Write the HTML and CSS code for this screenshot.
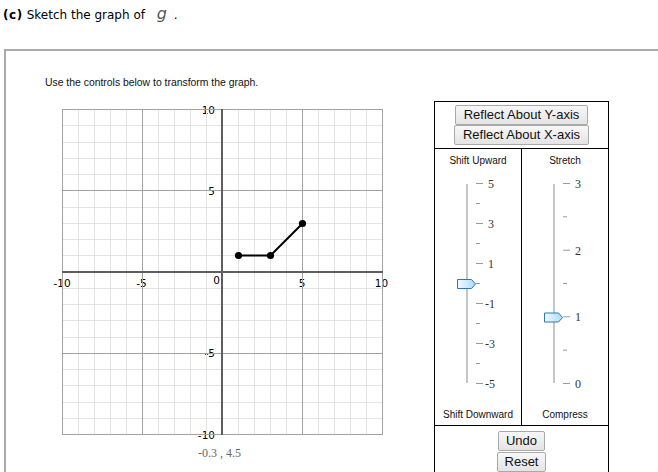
FILE: index.html
```html
<!DOCTYPE html>
<html>
<head>
<meta charset="utf-8">
<link rel="stylesheet" href="styles.css">
</head>
<body>
<div class="header"><b class="part">(c)</b> Sketch the graph of <span class="var">g</span> .</div>
<div class="box">
  <div class="instr">Use the controls below to transform the graph.</div>
  <div class="row">
    <div class="graphcol">
      <svg class="graph" width="380" height="347" viewBox="0 0 380 347">
        <g class="lbl">
          <text x="175" y="15" text-anchor="end">10</text>
          <text x="175" y="96" text-anchor="end">5</text>
          <text x="175" y="258" text-anchor="end">-5</text>
          <text x="175" y="340" text-anchor="end">-10</text>
          <text x="22" y="188" text-anchor="middle">-10</text>
          <text x="101.5" y="188" text-anchor="middle">-5</text>
          <text x="176.5" y="185" text-anchor="middle">0</text>
          <text x="262" y="188" text-anchor="middle">5</text>
          <text x="341.5" y="188" text-anchor="middle">10</text>
        </g>
        <g class="minor">
          <line x1="38.5" y1="10" x2="38.5" y2="336"/>
          <line x1="54.5" y1="10" x2="54.5" y2="336"/>
          <line x1="70.5" y1="10" x2="70.5" y2="336"/>
          <line x1="86.5" y1="10" x2="86.5" y2="336"/>
          <line x1="118.5" y1="10" x2="118.5" y2="336"/>
          <line x1="134.5" y1="10" x2="134.5" y2="336"/>
          <line x1="150.5" y1="10" x2="150.5" y2="336"/>
          <line x1="166.5" y1="10" x2="166.5" y2="336"/>
          <line x1="198.5" y1="10" x2="198.5" y2="336"/>
          <line x1="214.5" y1="10" x2="214.5" y2="336"/>
          <line x1="230.5" y1="10" x2="230.5" y2="336"/>
          <line x1="246.5" y1="10" x2="246.5" y2="336"/>
          <line x1="278.5" y1="10" x2="278.5" y2="336"/>
          <line x1="294.5" y1="10" x2="294.5" y2="336"/>
          <line x1="310.5" y1="10" x2="310.5" y2="336"/>
          <line x1="326.5" y1="10" x2="326.5" y2="336"/>
          <line x1="22" y1="26.5" x2="343" y2="26.5"/>
          <line x1="22" y1="43.5" x2="343" y2="43.5"/>
          <line x1="22" y1="59.5" x2="343" y2="59.5"/>
          <line x1="22" y1="75.5" x2="343" y2="75.5"/>
          <line x1="22" y1="108.5" x2="343" y2="108.5"/>
          <line x1="22" y1="124.5" x2="343" y2="124.5"/>
          <line x1="22" y1="140.5" x2="343" y2="140.5"/>
          <line x1="22" y1="156.5" x2="343" y2="156.5"/>
          <line x1="22" y1="189.5" x2="343" y2="189.5"/>
          <line x1="22" y1="205.5" x2="343" y2="205.5"/>
          <line x1="22" y1="221.5" x2="343" y2="221.5"/>
          <line x1="22" y1="238.5" x2="343" y2="238.5"/>
          <line x1="22" y1="270.5" x2="343" y2="270.5"/>
          <line x1="22" y1="286.5" x2="343" y2="286.5"/>
          <line x1="22" y1="303.5" x2="343" y2="303.5"/>
          <line x1="22" y1="319.5" x2="343" y2="319.5"/>
        </g>
        <g class="major">
          <line x1="22.5" y1="10" x2="22.5" y2="336"/>
          <line x1="102.5" y1="10" x2="102.5" y2="336"/>
          <line x1="262.5" y1="10" x2="262.5" y2="336"/>
          <line x1="342.5" y1="10" x2="342.5" y2="336"/>
          <line x1="22" y1="10.5" x2="343" y2="10.5"/>
          <line x1="22" y1="91.5" x2="343" y2="91.5"/>
          <line x1="22" y1="254.5" x2="343" y2="254.5"/>
          <line x1="22" y1="335.5" x2="343" y2="335.5"/>
        </g>
        <g class="axis">
          <line x1="182" y1="10" x2="182" y2="336"/>
          <line x1="22" y1="173" x2="343" y2="173"/>
        </g>
        <polyline class="fn" points="198.5,156.5 230.5,156.5 262.5,124.5"/>
        <circle class="pt" cx="198.5" cy="156.5" r="3.6"/>
        <circle class="pt" cx="230.5" cy="156.5" r="3.6"/>
        <circle class="pt" cx="262.5" cy="124.5" r="3.6"/>
      </svg>
      <div class="coord">-0.3 , 4.5</div>
    </div>
    <div class="panel">
      <div class="reflect">
        <button class="btn wide">Reflect About Y-axis</button>
        <button class="btn wide">Reflect About X-axis</button>
      </div>
      <div class="sliders">
        <div class="cell">
          <div class="cap">Shift Upward</div>
          <svg class="slider" width="86" height="241" viewBox="0 0 86 241">
            <defs>
              <linearGradient id="th" x1="0" y1="0" x2="1" y2="0">
                <stop offset="0" stop-color="#f3faff"/>
                <stop offset="1" stop-color="#a9daf6"/>
              </linearGradient>
            </defs>
            <rect class="track" x="31" y="16" width="2" height="199"/>
            <g class="tick">
              <line x1="41" y1="15.5" x2="48" y2="15.5"/>
              <line x1="41" y1="35.5" x2="45" y2="35.5"/>
              <line x1="41" y1="55.5" x2="48" y2="55.5"/>
              <line x1="41" y1="75.5" x2="45" y2="75.5"/>
              <line x1="41" y1="95.5" x2="48" y2="95.5"/>
              <line x1="41" y1="115.5" x2="45" y2="115.5"/>
              <line x1="41" y1="135.5" x2="48" y2="135.5"/>
              <line x1="41" y1="155.5" x2="45" y2="155.5"/>
              <line x1="41" y1="175.5" x2="48" y2="175.5"/>
              <line x1="41" y1="195.5" x2="45" y2="195.5"/>
              <line x1="41" y1="215.5" x2="48" y2="215.5"/>
            </g>
            <g class="tl">
              <text x="53" y="20">5</text>
              <text x="53" y="60">3</text>
              <text x="53" y="100">1</text>
              <text x="50" y="140">-1</text>
              <text x="50" y="180">-3</text>
              <text x="50" y="220">-5</text>
            </g>
            <path class="thumb" d="M22.5,111.5 H36.5 L40.5,116 L36.5,120.5 H22.5 Z"/>
          </svg>
          <div class="cap">Shift Downward</div>
        </div>
        <div class="cell">
          <div class="cap">Stretch</div>
          <svg class="slider" width="86" height="241" viewBox="0 0 86 241">
            <rect class="track" x="31" y="16" width="2" height="199"/>
            <g class="tick">
              <line x1="41" y1="15.5" x2="48" y2="15.5"/>
              <line x1="41" y1="48.8" x2="45" y2="48.8"/>
              <line x1="41" y1="82.2" x2="48" y2="82.2"/>
              <line x1="41" y1="115.5" x2="45" y2="115.5"/>
              <line x1="41" y1="148.8" x2="48" y2="148.8"/>
              <line x1="41" y1="182.2" x2="45" y2="182.2"/>
              <line x1="41" y1="215.5" x2="48" y2="215.5"/>
            </g>
            <g class="tl">
              <text x="53" y="20">3</text>
              <text x="53" y="86.5">2</text>
              <text x="53" y="153">1</text>
              <text x="53" y="220">0</text>
            </g>
            <path class="thumb" d="M22.5,145 H36.5 L40.5,149.5 L36.5,154 H22.5 Z"/>
          </svg>
          <div class="cap">Compress</div>
        </div>
      </div>
      <div class="actions">
        <button class="btn">Undo</button>
        <button class="btn">Reset</button>
      </div>
    </div>
  </div>
</div>
</body>
</html>
```
FILE: styles.css
```css
html, body {
  margin: 0;
  padding: 0;
  overflow: hidden;
  background: #fff;
}
body {
  font-family: "DejaVu Sans", Verdana, sans-serif;
  color: #000;
  width: 658px;
  height: 472px;
}
.header {
  font-size: 12px;
  line-height: 20px;
  padding: 4px 0 0 3px;
  box-sizing: border-box;
  height: 49px;
  white-space: pre;
}
.part {
  font-weight: bold;
  letter-spacing: 0.6px;
}
.var {
  font-family: "DejaVu Sans", sans-serif;
  font-style: italic;
  font-size: 16px;
  color: #555;
  padding: 0 3px 0 8px;
}
.box {
  margin-left: 4px;
  border-top: 2px solid #aaa;
  border-left: 2px solid #aaa;
  height: 421px;
}
.instr {
  font-family: "Liberation Sans", Arial, sans-serif;
  font-size: 10.4px;
  line-height: 12px;
  padding: 26px 0 0 39px;
  color: #111;
}
.row {
  display: flex;
  align-items: flex-start;
  margin-top: 10px;
}
.graphcol {
  margin-left: 34px;
  width: 380px;
}
.graph {
  display: block;
}
.lbl text {
  font-family: "DejaVu Sans", sans-serif;
  font-size: 10.5px;
  fill: #000;
}
.minor line {
  stroke: #e4e4e4;
  stroke-width: 1;
}
.major line {
  stroke: #a2a2a2;
  stroke-width: 1;
}
.axis line {
  stroke: #5e5e5e;
  stroke-width: 2;
}
.fn {
  fill: none;
  stroke: #000;
  stroke-width: 2;
}
.pt {
  fill: #000;
}
.coord {
  font-family: "Liberation Serif", "Times New Roman", serif;
  font-size: 12px;
  line-height: 14px;
  color: #666;
  margin: 0 0 0 158px;
}
.panel {
  margin-left: 14px;
  margin-top: 2px;
  width: 175px;
  border: 1px solid #000;
  border-bottom: none;
  box-sizing: border-box;
}
.reflect {
  padding: 3px 0 3px;
  display: flex;
  flex-direction: column;
  align-items: center;
  border-bottom: 1px solid #000;
}
.btn {
  font-family: "Liberation Sans", Arial, sans-serif;
  font-size: 13px;
  height: 20px;
  line-height: 18px;
  padding: 0 7px;
  margin: 0;
  box-sizing: border-box;
  border: 1px solid #a9a9a9;
  border-radius: 2px;
  background: linear-gradient(#f7f7f7, #e4e4e4);
  color: #111;
}
.btn.wide {
  padding: 0 8px;
}
.sliders {
  display: grid;
  grid-template-columns: 86px 86px;
  column-gap: 1px;
  background: #000;
  border-bottom: 1px solid #000;
}
.cell {
  background: #fff;
  padding: 6px 0 4px;
  display: flex;
  flex-direction: column;
}
.cap {
  font-family: "Liberation Sans", Arial, sans-serif;
  font-size: 10px;
  line-height: 12px;
  text-align: center;
  color: #111;
}
.slider {
  display: block;
  margin-top: 1px;
}
.track {
  fill: #c6c6c6;
}
.tick line {
  stroke: #9a9a9a;
  stroke-width: 1;
}
.tl text {
  font-family: "Liberation Serif", "Times New Roman", serif;
  font-size: 12px;
  fill: #333;
}
.thumb {
  fill: url(#th);
  stroke: #2a78b6;
  stroke-width: 1;
}
.actions {
  padding: 5px 0 0;
  display: flex;
  flex-direction: column;
  align-items: center;
  row-gap: 1px;
}
.actions .btn {
  height: 20px;
}
```
